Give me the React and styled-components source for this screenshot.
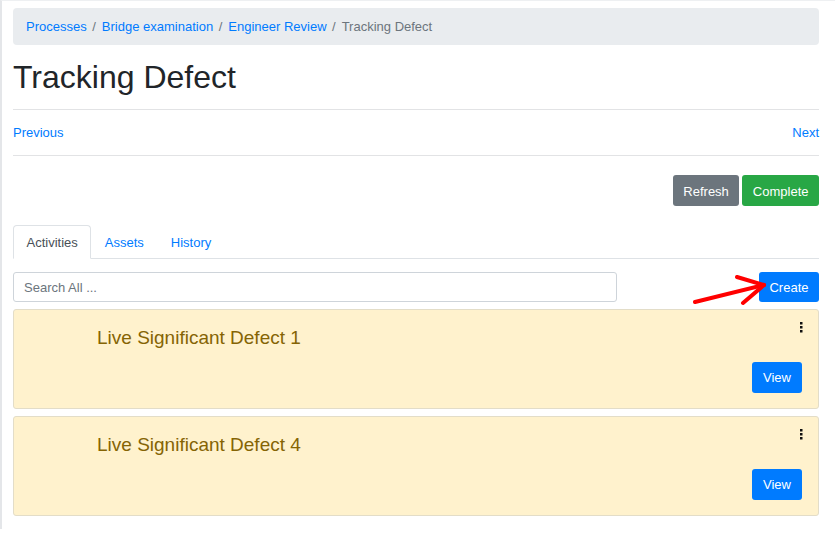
import React, { useState } from 'react'
import styled, { createGlobalStyle } from 'styled-components'

const GlobalStyle = createGlobalStyle`
  * { box-sizing: border-box; }
  html, body {
    margin: 0;
    padding: 0;
    background: #fff;
    font-family: 'Liberation Sans', Arial, sans-serif;
    color: #212529;
  }
`

function Kebab() {
  return (
    <svg width='4' height='11' viewBox='0 0 4 11'>
      <rect x='1' y='0' width='2.5' height='2.5' fill='#111' />
      <rect x='1' y='4' width='2.5' height='2.5' fill='#111' />
      <rect x='1' y='8' width='2.5' height='2.5' fill='#111' />
    </svg>
  )
}

function Arrow() {
  return (
    <ArrowSvg width='90' height='40' viewBox='0 0 90 40'>
      <g stroke='#ff0000' strokeWidth='4' strokeLinecap='round' fill='none'>
        <line x1='7' y1='30' x2='76' y2='13' />
        <line x1='49' y1='5' x2='76' y2='13' />
        <line x1='55' y1='31' x2='76' y2='13' />
      </g>
    </ArrowSvg>
  )
}

function App() {
  const [tab, setTab] = useState('Activities')
  const tabs = ['Activities', 'Assets', 'History']
  const defects = ['Live Significant Defect 1', 'Live Significant Defect 4']
  const crumbs = ['Processes', 'Bridge examination', 'Engineer Review']

  return (
    <Page>
      <GlobalStyle />
      <Breadcrumb>
        {crumbs.map((c) => (
          <Crumb key={c}>
            <Link href='#'>{c}</Link>
            <Sep>/</Sep>
          </Crumb>
        ))}
        <Current>Tracking Defect</Current>
      </Breadcrumb>
      <Title>Tracking Defect</Title>
      <Pager>
        <Link href='#'>Previous</Link>
        <Link href='#'>Next</Link>
      </Pager>
      <Actions>
        <Button variant='secondary'>Refresh</Button>
        <Button variant='success'>Complete</Button>
      </Actions>
      <Tabs>
        {tabs.map((t) => (
          <Tab key={t} active={tab === t} onClick={() => setTab(t)}>
            {t}
          </Tab>
        ))}
      </Tabs>
      <SearchRow>
        <SearchInput placeholder='Search All ...' />
        <Arrow />
        <Button variant='primary'>Create</Button>
      </SearchRow>
      <CardList>
        {defects.map((d) => (
          <Card key={d}>
            <MenuToggle>
              <Kebab />
            </MenuToggle>
            <CardTitle>{d}</CardTitle>
            <CardFooter>
              <Button variant='primary'>View</Button>
            </CardFooter>
          </Card>
        ))}
      </CardList>
    </Page>
  )
}

export default App

const colors = {
  primary: '#007bff',
  secondary: '#6c757d',
  success: '#28a745',
}

const Page = styled.div`
  min-height: 529px;
  border-left: 2px solid #e4e6e9;
  border-top: 1px solid #eef0f2;
  padding: 7px 16px 0 11px;
`
const Breadcrumb = styled.nav`
  display: flex;
  align-items: center;
  height: 37px;
  padding: 0 13px;
  background-color: #e9ecef;
  border-radius: 4px;
  font-size: 13px;
`
const Crumb = styled.span`
  display: flex;
  align-items: center;
`
const Link = styled.a`
  color: #007bff;
  text-decoration: none;
  font-size: 13px;
`
const Sep = styled.span`
  color: #6c757d;
  padding: 0 6px 0 5.5px;
`
const Current = styled.span`
  color: #6c757d;
`
const Title = styled.h1`
  margin: 13px 0 13px;
  font-size: 32px;
  font-weight: 400;
  line-height: 1.2;
  color: #212529;
`
const Pager = styled.div`
  display: flex;
  justify-content: space-between;
  align-items: center;
  height: 47px;
  border-top: 1px solid #e2e3e5;
  border-bottom: 1px solid #e2e3e5;
`
const Actions = styled.div`
  display: flex;
  justify-content: flex-end;
  gap: 3px;
  margin-top: 19px;
`
const Button = styled.button`
  font-family: 'Liberation Sans', Arial, sans-serif;
  font-size: 13px;
  line-height: 1.5;
  color: #fff;
  border: none;
  border-radius: 3px;
  padding: 6px 10.5px 5px;
  height: ${(props) => (props.variant === 'primary' ? '30px' : '31px')};
  background-color: ${(props) => colors[props.variant]};
  cursor: pointer;
`
const Tabs = styled.div`
  display: flex;
  margin-top: 19px;
  border-bottom: 1px solid #dee2e6;
`
const Tab = styled.div`
  height: 34px;
  margin-bottom: -1px;
  padding: 0 12.5px 0 12.5px;
  display: flex;
  align-items: center;
  font-size: 13px;
  cursor: pointer;
  border: 1px solid ${(props) => (props.active ? '#dee2e6' : 'transparent')};
  border-bottom-color: ${(props) => (props.active ? '#fff' : 'transparent')};
  border-radius: 4px 4px 0 0;
  background: ${(props) => (props.active ? '#fff' : 'transparent')};
  color: ${(props) => (props.active ? '#495057' : '#007bff')};
`
const SearchRow = styled.div`
  position: relative;
  display: flex;
  justify-content: space-between;
  align-items: center;
  margin-top: 13px;
`
const SearchInput = styled.input`
  width: 604px;
  height: 30px;
  padding: 0 10px;
  border: 1px solid #ced4da;
  border-radius: 3px;
  font-family: 'Liberation Sans', Arial, sans-serif;
  font-size: 13px;
  color: #495057;
  &::placeholder {
    color: #6c757d;
  }
`
const ArrowSvg = styled.svg`
  position: absolute;
  left: 675px;
  top: 0;
  pointer-events: none;
`
const CardList = styled.div`
  display: flex;
  flex-direction: column;
  gap: 7px;
  margin-top: 7px;
`
const Card = styled.div`
  position: relative;
  display: flex;
  flex-direction: column;
  height: 100px;
  padding: 17px 16px 15px 83px;
  background-color: #fff2cd;
  border: 1px solid #e3ddc8;
  border-radius: 3px;
`
const MenuToggle = styled.div`
  position: absolute;
  top: 12px;
  right: 15px;
  display: flex;
  cursor: pointer;
`
const CardTitle = styled.h5`
  margin: 0;
  font-size: 19px;
  font-weight: 400;
  line-height: 1.2;
  color: #856404;
`
const CardFooter = styled.div`
  display: flex;
  justify-content: flex-end;
  margin-top: auto;
  button {
    height: 31px;
    padding: 0 11px;
  }
`
